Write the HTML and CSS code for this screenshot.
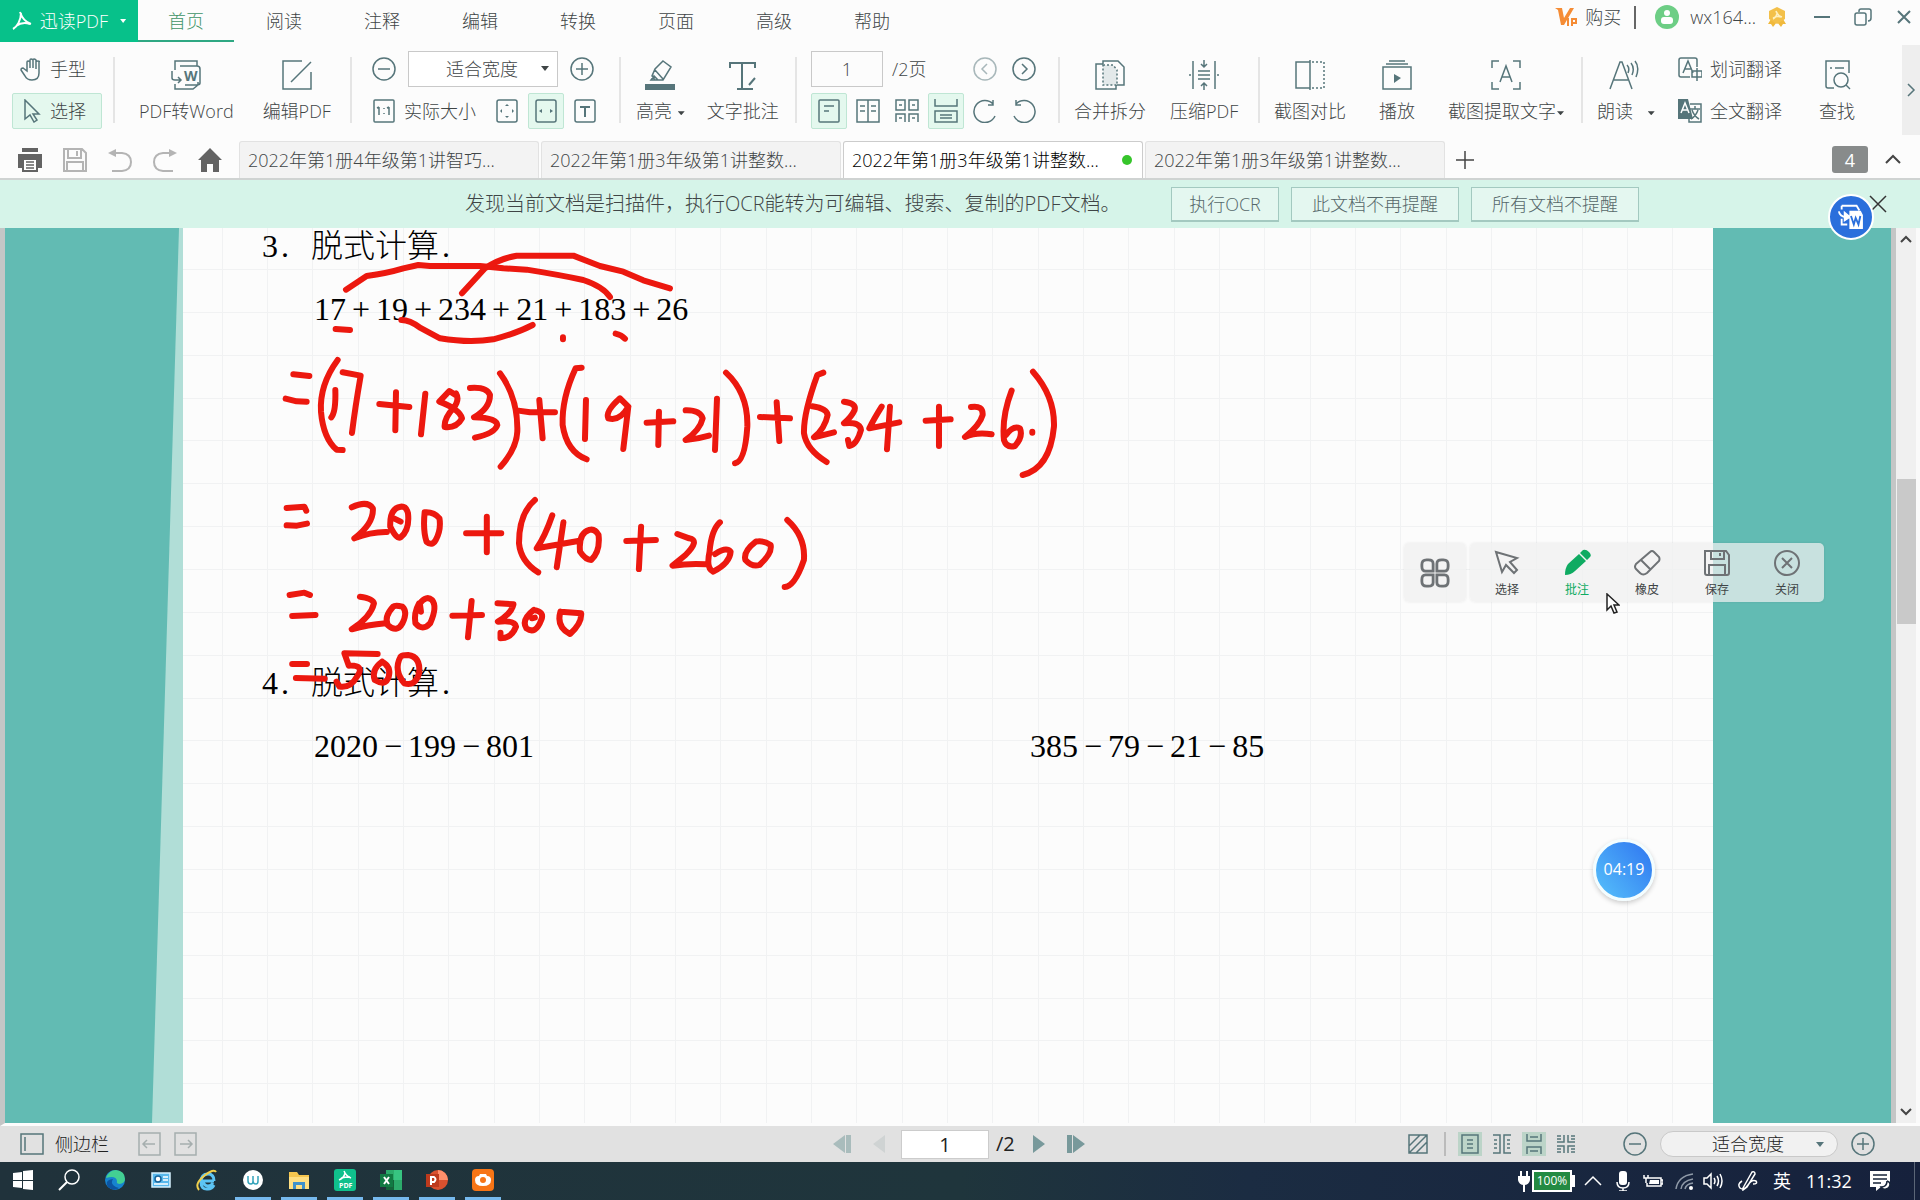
FILE: index.html
```html
<!DOCTYPE html>
<html lang="zh-CN">
<head>
<meta charset="utf-8">
<title>迅读PDF</title>
<link rel="stylesheet" href="styles.css">
</head>
<body>
<header class="titlebar">
  <button class="brand"><svg class="i20" viewBox="0 0 20 20"><path d="M8 1c2 6 5 10 11 12M9 2C9 9 5 16 1 18M4 15c4-3 9-4 14-2" stroke-width="2"/></svg><span>迅读PDF</span><span class="caret"></span></button>
  <nav class="menu">
    <a href="#home" class="on">首页</a><a href="#read">阅读</a><a href="#annotate">注释</a><a href="#edit">编辑</a><a href="#convert">转换</a><a href="#page">页面</a><a href="#advanced">高级</a><a href="#help">帮助</a>
  </nav>
  <div class="account">
    <a class="vip" href="#vip"><svg class="i22" viewBox="0 0 22 22"><path d="M0 2h7l2 10 6-10h4L9 19H6L3 4Z" fill="#f58c35" stroke="none"/><path d="M13 12v8M17 20v-7h4v4h-4" stroke="#f58c35" stroke-width="2"/></svg><span>购买</span></a>
    <span class="bar"></span>
    <a class="user" href="#user"><svg class="i24" viewBox="0 0 24 24"><circle cx="12" cy="12" r="12" fill="#6dce85" stroke="none"/><circle cx="12" cy="8" r="3" fill="#fff" stroke="none"/><rect x="6" y="12" width="12" height="7" rx="3" fill="#fff" stroke="none"/></svg><span>wx164...</span><svg class="i20" viewBox="0 0 20 20"><path d="M4 12l-3 5h3l2 3 4-5 4 5 2-3h3l-3-5Z" fill="#f0b93c" stroke="none"/><path d="M10 0l8 4v8l-8 5-8-5V4Z" fill="#f3c04a" stroke="none"/><path d="M9 4c1 4 3 5 6 6M10 5c0 3-2 6-4 7M6 11c3-2 5-2 8-1" stroke="#fff0c0"/></svg></a>
    <div class="win">
      <button aria-label="最小化"><svg class="i20" viewBox="0 0 20 20"><path d="M2 10h16" stroke-width="2"/></svg></button>
      <button aria-label="还原"><svg class="i20" viewBox="0 0 20 20"><rect x="2" y="6" width="11" height="12" rx="2"/><path d="M6 5V4q0-2 2-2h8q2 0 2 2v7q0 3-3 3"/></svg></button>
      <button aria-label="关闭"><svg class="i20" viewBox="0 0 20 20"><path d="M4 4l12 12M16 4L4 16" stroke-width="2"/></svg></button>
    </div>
  </div>
</header>

<section class="ribbon">
  <div class="group g-tools rows">
    <button class="row-btn"><svg class="i24" viewBox="0 0 24 24"><path d="M7 14V5q0-1 1-1t2 1v6V3q0-1 1-1t2 1v8V3q0-1 1-1t2 1v9V5q0-1 2-1t1 1v11q0 7-7 7-5 0-7-4l-4-6q0-2 2-2Z"/></svg><span>手型</span></button>
    <button class="row-btn active"><svg class="i24" viewBox="0 0 24 24"><path d="M5 1l14 14h-6l4 6-3 2-4-7-5 4Z"/></svg><span>选择</span></button>
  </div>
  <span class="sep"></span>
  <div class="group g-convert">
    <button class="big"><svg viewBox="0 0 30 30"><path d="M4 10V1h22v5M4 24v5h18l5-4v-3M1 11v7q0 2 3 2h6M7 17l3 3-3 3M9 6h17q3 0 3 3v14q0 2-3 2H14"/><text x="13" y="21" class="w">W</text></svg><span>PDF转Word</span></button>
    <button class="big"><svg viewBox="0 0 30 30"><path d="M20 1H1v28h28V12M9 22L29 2"/></svg><span>编辑PDF</span></button>
  </div>
  <span class="sep"></span>
  <div class="group g-zoom rows">
    <div class="line gap12">
      <button aria-label="缩小"><svg class="i24" viewBox="0 0 24 24"><circle cx="12" cy="12" r="11"/><path d="M6 12h12"/></svg></button>
      <label class="fit"><select aria-label="缩放"><option>适合宽度</option></select><span class="caret"></span></label>
      <button aria-label="放大"><svg class="i24" viewBox="0 0 24 24"><circle cx="12" cy="12" r="11"/><path d="M6 12h12M12 6v12"/></svg></button>
    </div>
    <div class="line gap3">
      <button class="actual"><svg class="i24" viewBox="0 0 24 24"><rect x="2" y="1" width="20" height="22" rx="1"/><path d="M7 8v8M17 8v8M5 9l2-1M15 9l2-1M12 9v1M12 14v1"/></svg><span>实际大小</span></button>
      <button class="sq" aria-label="适合页面"><svg class="i24" viewBox="0 0 24 24"><rect x="2" y="1" width="20" height="22" rx="2"/><path d="M10 7l2-2 2 2zM10 17l2 2 2-2zM7 10l-2 2 2 2zM17 10l2 2-2 2z" fill="#56757a" stroke="none"/></svg></button>
      <button class="sq active" aria-label="适合宽度"><svg class="i24" viewBox="0 0 24 24"><rect x="2" y="1" width="20" height="22" rx="2"/><path d="M8 10l-3 2 3 2zM16 10l3 2-3 2z" fill="#56757a" stroke="none"/></svg></button>
      <button class="sq" aria-label="适合文字"><svg class="i24" viewBox="0 0 24 24"><rect x="2" y="1" width="20" height="22" rx="2"/><path d="M7 8h10M12 8v10" stroke-width="2"/></svg></button>
    </div>
  </div>
  <span class="sep"></span>
  <div class="group g-mark">
    <button class="big"><svg viewBox="0 0 30 30"><path d="M18 1l8 6-8 13H10l-3-4 3-7ZM10 10l8 9M6 20l3-4 4 4Z"/><path d="M0 24h30v6H0z" fill="#56757a" stroke="none"/></svg><span>高亮 <i class="caret"></i></span></button>
    <button class="big"><svg viewBox="0 0 30 30"><path d="M2 8V3h25v5M14 3v26M9 29h16M21 25l6-7" stroke-width="2"/></svg><span>文字批注</span></button>
  </div>
  <span class="sep"></span>
  <div class="group g-page rows">
    <div class="line gap3">
      <input class="pageno" aria-label="页码" value="1"><span class="total">/2页</span>
      <button class="sq dim" aria-label="上一页"><svg class="i24" viewBox="0 0 24 24"><circle cx="12" cy="12" r="11"/><path d="M14 7l-5 5 5 5"/></svg></button>
      <button class="sq" aria-label="下一页"><svg class="i24" viewBox="0 0 24 24"><circle cx="12" cy="12" r="11"/><path d="M10 7l5 5-5 5"/></svg></button>
    </div>
    <div class="line gap3">
      <button class="sq active" aria-label="单页"><svg class="i24" viewBox="0 0 24 24"><rect x="2" y="1" width="20" height="22" rx="1"/><path d="M7 7h10M7 12h5"/></svg></button>
      <button class="sq" aria-label="双页"><svg class="i24" viewBox="0 0 24 24"><path d="M1 1h22v22H1zM12 1v22M4 7h5M4 12h5M15 7h5M15 12h5"/></svg></button>
      <button class="sq" aria-label="双页连续"><svg class="i24" viewBox="0 0 24 24"><path d="M1 1h9v10H1zM14 1h9v10h-9zM1 23v-8h9v8M14 23v-8h9v8M4 6h3M17 6h3M4 19h3M17 19h3"/></svg></button>
      <button class="sq active" aria-label="连续"><svg class="i24" viewBox="0 0 24 24"><path d="M1 0v7h22V0M1 12h22v11H1zM6 16h12M6 19h12"/></svg></button>
      <button class="sq" aria-label="顺时针旋转"><svg class="i24" viewBox="0 0 24 24"><path d="M22 17A11 11 0 1 1 20 5M20 1v5h-5"/></svg></button>
      <button class="sq" aria-label="逆时针旋转"><svg class="i24" viewBox="0 0 24 24"><path d="M2 17A11 11 0 1 0 4 5M4 1v5h5"/></svg></button>
    </div>
  </div>
  <span class="sep"></span>
  <div class="group g-merge">
    <button class="big"><svg viewBox="0 0 30 30"><path d="M8 4H1v25h20v-4M8 4V1h15l6 6v18h-8"/><path d="M8 5h10l4 5v15H8z" fill="#e3e9ea" stroke-dasharray="2 2"/></svg><span>合并拆分</span></button>
    <button class="big"><svg viewBox="0 0 30 30"><path d="M4 1v28M26 1v28M9 11h12M9 15h12M9 19h12M15 0v7M12 4l3 3 3-3M15 30v-7M12 26l3-3 3 3M1 14v2M29 14v2"/></svg><span>压缩PDF</span></button>
  </div>
  <span class="sep"></span>
  <div class="group g-capture">
    <button class="big"><svg viewBox="0 0 30 30"><path d="M15 2H1v26h14M15 0v30"/><path d="M17 2h12v26H17" stroke-dasharray="2 2"/></svg><span>截图对比</span></button>
    <button class="big"><svg viewBox="0 0 30 30"><path d="M1 7h28v22H1zM4 4h22M7 1h16"/><path d="M12 14v9l7-5z" fill="#56757a" stroke="none"/></svg><span>播放</span></button>
    <button class="big"><svg viewBox="0 0 30 30"><path d="M8 1H1v7M22 1h7v7M1 22v7h7M29 22v7h-7M9 22l6-16 6 16M11 17h8"/></svg><span>截图提取文字<i class="caret"></i></span></button>
  </div>
  <span class="sep"></span>
  <div class="group g-lang">
    <button class="big wide"><svg viewBox="0 0 30 30"><path d="M1 29L11 2h2l10 27M5 20h14"/><path d="M18 5q3 3 1 8M22 3q4 5 1 12M26 1q5 6 1 16"/></svg><span>朗读 <i class="caret"></i></span></button>
    <div class="rows tr">
      <button class="row-btn"><svg class="i24" viewBox="0 0 24 24"><path d="M12 20H3q-2 0-2-2V3q0-2 2-2h14q2 0 2 2v7M5 16L10 4l5 12M7 12h6M14 14h10v6H14zM19 11v13"/></svg><span>划词翻译</span></button>
      <button class="row-btn"><svg class="i24" viewBox="0 0 24 24"><path d="M0 0h10l5 20H0z" fill="#56757a" stroke="none"/><path d="M12 5h11v18H11v-4M12 10h10M17 7v3M20 11q-2 6-7 9M14 11q2 6 7 9"/><path d="M3 14L7 4l4 10M4 11h6" stroke="#fff"/></svg><span>全文翻译</span></button>
    </div>
    <button class="big find"><svg viewBox="0 0 30 30"><path d="M12 28H6q-2 0-2-2V1h23v12M8 8h2M13 8h9"/><circle cx="19" cy="20" r="7"/><path d="M24 25l4 4"/></svg><span>查找</span></button>
  </div>
  <button class="more" aria-label="更多工具"><svg class="i14" viewBox="0 0 14 14"><path d="M4 1l6 6-6 6"/></svg></button>
</section>

<section class="docbar">
  <div class="quick">
    <button aria-label="打印"><svg class="i24" viewBox="0 0 24 24"><path d="M4 0h16v4H4zM0 6h24v14h-4v4H4v-4H0z" fill="#636363" stroke="none"/><path d="M6 12h12v10H6z" fill="#fff" stroke="none"/><path d="M8 14h8M8 17h8M8 20h8" stroke="#636363"/></svg></button>
    <button aria-label="保存"><svg class="i24" viewBox="0 0 24 24"><path d="M1 1h18l4 4v18H1zM5 1v9h13V1M14 3v5M4 23v-9h16v9" stroke="#b4b4b4" stroke-width="2"/></svg></button>
    <button aria-label="撤销"><svg class="i24" viewBox="0 0 24 24"><path d="M2 5h12q9 1 9 9t-9 9H4" stroke="#b4b4b4" stroke-width="2"/><path d="M0 5l8-4v8z" fill="#b4b4b4" stroke="none"/></svg></button>
    <button aria-label="重做"><svg class="i24" viewBox="0 0 24 24"><path d="M22 5H10q-9 1-9 9t9 9h10" stroke="#b4b4b4" stroke-width="2"/><path d="M24 5l-8-4v8z" fill="#b4b4b4" stroke="none"/></svg></button>
    <button aria-label="主页"><svg class="i24" viewBox="0 0 24 24"><path d="M12 0l12 12h-3v12h-6v-8H9v8H3V12H0z" fill="#636363" stroke="none"/></svg></button>
  </div>
  <nav class="tabs">
    <a href="#d1">2022年第1册4年级第1讲智巧...</a>
    <a href="#d2">2022年第1册3年级第1讲整数...</a>
    <a href="#d3" class="on">2022年第1册3年级第1讲整数...<span class="dot"></span></a>
    <a href="#d4">2022年第1册3年级第1讲整数...</a>
  </nav>
  <button class="newtab" aria-label="新建标签"><svg class="i20" viewBox="0 0 20 20"><path d="M1 10h18M10 1v18"/></svg></button>
  <button class="count">4</button>
  <button class="fold" aria-label="收起"><svg class="i20" viewBox="0 0 20 20"><path d="M3 13l7-7 7 7" stroke-width="2"/></svg></button>
</section>

<section class="notice">
  <p>发现当前文档是扫描件，执行OCR能转为可编辑、搜索、复制的PDF文档。</p>
  <button class="nb">执行OCR</button>
  <button class="nb">此文档不再提醒</button>
  <button class="nb">所有文档不提醒</button>
  <button class="close" aria-label="关闭提示"><svg class="i20" viewBox="0 0 20 20"><path d="M2 2l16 16M18 2L2 18" stroke="#333"/></svg></button>
</section>

<main class="view">
  <svg class="desk" aria-hidden="true"><path d="M0 0H174L147 895H0z" fill="#62bbb3" stroke="none"/></svg>
  <article class="sheet">
    <svg class="grid" aria-hidden="true"><defs><pattern id="cells" x="84" y="41" width="136" height="300" patternUnits="userSpaceOnUse"><path d="M0 0h136v1H0zM0 43h136v1H0zM0 86h136v1H0zM0 129h136v1H0zM0 171h136v1H0zM0 214h136v1H0zM0 257h136v1H0zM0 0h1v300H0zM45 0h1v300h-1zM91 0h1v300h-1z" fill="#f1f2f3" stroke="none"/></pattern></defs><rect width="100%" height="100%" fill="url(#cells)" stroke="none"/></svg>
    <section class="q q3">
      <h2><span class="no">3<i>.</i></span>脱式计算<span class="stop">.</span></h2>
      <div class="exprs"><p>17<b>+</b>19<b>+</b>234<b>+</b>21<b>+</b>183<b>+</b>26</p></div>
    </section>
    <section class="q q4">
      <h2><span class="no">4<i>.</i></span>脱式计算<span class="stop">.</span></h2>
      <div class="exprs"><p>2020<b>−</b>199<b>−</b>801</p><p>385<b>−</b>79<b>−</b>21<b>−</b>85</p></div>
    </section>
  </article>
  <div class="scroll"><svg class="i14" viewBox="0 0 14 14"><path d="M2 10l5-5 5 5" stroke="#444" stroke-width="2"/></svg><span class="thumb"></span><svg class="i14" viewBox="0 0 14 14"><path d="M2 4l5 5 5-5" stroke="#444" stroke-width="2"/></svg></div>

  <svg class="ink" aria-hidden="true">
    <g transform="translate(240 -3) scale(.3333)">
      <path d="M318 194L380 153Q440 145 490 130L535 120 570 123H720L790 130 860 134Q960 150 1030 165 1090 185 1110 216"/>
      <path d="M666 205L735 130Q780 100 830 92H1000L1080 123 1150 140 1210 166 1290 190M484 285Q510 285 540 308L600 340Q690 355 760 343 830 325 878 300M287 312L330 315M969 337V343M1127 326Q1145 330 1155 341"/>
      <path d="M160 448L208 453M137 521L170 529 200 530M293 405Q238 480 243 560 250 640 290 674L308 675M286 495Q288 560 274 577M308 442L362 452Q345 550 336 624M418 537L508 546M468 502L466 616M556 506L543 628"/>
      <path d="M650 512L628 498 598 530Q658 552 666 580 650 610 614 606 612 580 640 550 660 525 648 505M690 489Q740 485 750 510 750 550 702 577 770 578 772 600 765 625 705 638M780 445Q835 520 832 620 830 670 782 725"/>
      <path d="M835 557L870 562 945 562M898 525L908 640M1025 428L1007 430Q965 520 968 600 980 680 1040 703M1038 525L1035 642M1165 545L1140 520Q1095 560 1105 580 1140 590 1165 545L1150 672M1220 593L1300 589M1257 560L1255 660"/>
    </g>
    <g transform="translate(640 112) scale(.3333)">
      <path d="M137 211Q180 210 188 235 180 270 137 300 170 298 207 287M231 176L225 330M258 98Q325 160 322 260 315 365 285 370M360 231L450 235M410 187L418 303M550 98L532 105Q490 220 492 280 500 330 560 366"/>
      <path d="M517 199Q560 205 563 225 555 265 522 292L582 277M612 185Q650 190 644 210 635 230 612 250 660 245 663 270 650 315 628 318L624 300M725 200Q700 240 688 265L778 247M750 200L741 328M857 242L932 238M897 200V318"/>
      <path d="M993 201Q1030 195 1028 225 1020 255 975 291 1010 275 1055 283M1115 152Q1085 230 1092 300 1100 325 1125 318 1150 290 1140 265 1120 255 1098 285M1177 275V278M1179 95Q1245 170 1242 260 1230 385 1148 405"/>
    </g>
    <g transform="translate(260 252) scale(.37 .3333)">
      <path d="M72 84L120 80 125 92M72 136L100 137 127 131M248 82Q290 60 305 85 308 130 255 175 300 155 343 156M380 80Q350 85 352 140 370 180 380 172 405 150 400 100 395 78 380 80M362 115L380 125M445 97Q440 150 450 185 465 200 475 180 490 150 485 115 470 95 445 97"/>
      <path d="M557 160H652M613 110V217M743 60Q700 100 700 190 705 245 752 277M790 106Q770 170 748 205L860 183M820 127L802 262M890 150Q860 160 865 215 880 240 895 240 920 215 915 165 905 145 890 150M990 183L1070 180M1030 140L1024 267"/>
      <path d="M1128 162L1160 175Q1190 180 1150 225L1115 257Q1160 250 1205 253M1243 127Q1220 150 1215 215 1205 265 1225 275 1270 250 1272 215 1260 200 1230 222M1340 185Q1305 215 1312 240 1330 262 1350 255 1385 220 1380 195 1360 180 1340 185M1425 120Q1475 170 1470 240 1445 320 1418 321"/>
      <path d="M80 345L120 338 135 345M87 408L150 405M270 350Q305 355 308 370 300 410 248 448 290 435 340 430M360 380Q335 410 345 435 370 460 385 430 400 395 385 380 365 375 360 380M430 370Q415 400 420 430 440 455 460 430 480 380 465 360 450 345 432 370L435 395"/>
      <path d="M520 407L600 405M572 363L562 472M642 370L685 373Q680 400 643 425 690 420 692 440 680 475 650 475L650 458M740 390Q705 420 720 445 745 465 760 420 770 395 740 390M735 415L743 413M812 395L868 400Q870 430 838 462 800 440 812 395"/>
      <path d="M87 552H127M97 594L175 596M318 522L228 520 240 557Q285 555 262 590 245 625 215 620L207 605M330 545Q300 570 310 600 340 620 348 590 355 560 330 545M380 530Q360 570 390 610 420 620 430 580 435 530 400 525 385 525 380 530"/>
    </g>
  </svg>

  <div class="palette">
    <button class="apps" aria-label="工具"><svg viewBox="0 0 32 32"><path d="M14 14H6q-4 0-4-5V7q0-5 5-5h2q5 0 5 4zM18 14h8q4 0 4-5V7q0-5-5-5h-2q-5 0-5 4zM14 18H6q-4 0-4 5v2q0 5 5 5h2q5 0 5-4zM18 18h8q4 0 4 5v2q0 5-5 5h-2q-5 0-5-4z" stroke-width="3"/></svg></button>
    <div class="pens">
      <button><svg viewBox="0 0 28 28"><path d="M3 3l21 6-7 4 7 8-3 3-8-8-4 7Z" stroke-width="2"/></svg><span>选择</span></button>
      <button class="on"><svg viewBox="0 0 28 28"><path d="M2 26q0-7 3-11L16 5l7 7-11 10q-4 4-10 4ZM17 4l3-3q3-1 6 2t1 5l-3 3z" fill="#0fab62" stroke="none"/></svg><span>批注</span></button>
      <button><svg viewBox="0 0 28 28"><path d="M3 15L17 3q2-2 4 0l5 5q1 2 0 4L14 24q-4 3-7 0l-4-4q-2-2 0-5ZM8 11l10 10" stroke-width="2"/></svg><span>橡皮</span></button>
      <button><svg viewBox="0 0 28 28"><path d="M2 2h21l3 4v18q0 2-2 2H4q-2 0-2-2ZM8 2v8h13V2M17 4v3M6 26V16h16v10" stroke-width="2"/></svg><span>保存</span></button>
      <button><svg viewBox="0 0 28 28"><circle cx="14" cy="14" r="12" stroke-width="2"/><path d="M9 9l10 10M19 9L9 19" stroke-width="2"/></svg><span>关闭</span></button>
    </div>
  </div>
  <svg class="cursor" viewBox="0 0 14 22" aria-hidden="true"><path d="M1 1v16l4-4 3 7 3-1-3-7h5z" fill="#fff" stroke="#222"/></svg>
  <div class="timer">04:19</div>
</main>
<button class="toword" aria-label="转为Word"><svg viewBox="0 0 30 30"><path d="M5 3h16l3 5M5 3v4M5 17v6h6M2 9q1 6 8 6" stroke="#fff" stroke-width="2"/><path d="M8 10l6 5-6 4zM14 9h11l2 4v14H14z" fill="#fff" stroke="#fff"/><path d="M15 14l3 9 2-7 3 7 2-9" stroke="#2a6fdc" stroke-width="2"/></svg></button>

<footer class="status">
  <button class="side"><svg class="i24" viewBox="0 0 24 24"><path d="M1 2h22v20H1zM5 5v14"/></svg><span>侧边栏</span></button>
  <button class="mut a1" aria-label="后退"><svg class="i24" viewBox="0 0 24 24"><path d="M1 1h21v22H1zM5 12h12M9 8l-4 4 4 4"/></svg></button>
  <button class="mut a2" aria-label="前进"><svg class="i24" viewBox="0 0 24 24"><path d="M1 1h21v22H1zM6 12h12M14 8l4 4-4 4"/></svg></button>
  <div class="pager">
    <button aria-label="首页"><svg class="i20" viewBox="0 0 20 20"><path d="M13 1v18L1 10zM14 1h5v18h-5z" fill="#a9bcbc" stroke="none"/></svg></button>
    <button aria-label="上一页"><svg class="i20" viewBox="0 0 20 20"><path d="M16 1v18L4 10z" fill="#cfd3d3" stroke="none"/></svg></button>
    <input aria-label="当前页" value="1"><span>/2</span>
    <button aria-label="下一页"><svg class="i20" viewBox="0 0 20 20"><path d="M4 1v18l12-9z" fill="#78999b" stroke="none"/></svg></button>
    <button aria-label="末页"><svg class="i20" viewBox="0 0 20 20"><path d="M7 1v18l12-9zM1 1h5v18H1z" fill="#78999b" stroke="none"/></svg></button>
  </div>
  <div class="modes">
    <button aria-label="背景"><svg class="i20" viewBox="0 0 20 20"><path d="M1 1h18v18H1zM1 12L12 1M1 19L19 1M8 19L19 8"/></svg></button>
    <span class="vr"></span>
    <button class="m on" aria-label="单页"><svg class="i20" viewBox="0 0 20 20"><path d="M2 1h16v18H2zM7 6h6M7 10h6M7 14h6"/></svg></button>
    <button class="m" aria-label="双页"><svg class="i20" viewBox="0 0 20 20"><path d="M1 1h7v18H1M19 1h-7v18h7M2 6h3M2 10h3M2 14h3M15 6h3M15 10h3M15 14h3"/></svg></button>
    <button class="m on" aria-label="连续"><svg class="i20" viewBox="0 0 20 20"><path d="M3 0v7h14V0M3 20v-7h14v7M6 3h8M6 17h8"/></svg></button>
    <button class="m" aria-label="双页连续"><svg class="i20" viewBox="0 0 20 20"><path d="M1 8h7V1M19 8h-7V1M1 12h7v7M19 12h-7v7M1 2h4M1 5h4M15 2h4M15 5h4M1 15h4M1 18h4M15 15h4M15 18h4"/></svg></button>
    <button class="zo" aria-label="缩小"><svg class="i24" viewBox="0 0 24 24"><circle cx="12" cy="12" r="11"/><path d="M6 12h12"/></svg></button>
    <label class="fit pill"><select aria-label="页面缩放"><option>适合宽度</option></select><span class="caret"></span></label>
    <button aria-label="放大"><svg class="i24" viewBox="0 0 24 24"><circle cx="12" cy="12" r="11"/><path d="M6 12h12M12 6v12"/></svg></button>
  </div>
</footer>

<footer class="taskbar">
  <div class="apps-row">
    <button aria-label="开始"><svg viewBox="0 0 22 22"><path d="M1 4l9-1v8H1zM11 2l10-1v10H11zM1 12h9v7l-9-1zM11 12h10v9l-10-1z" fill="#fff" stroke="none"/></svg></button>
    <button aria-label="搜索"><svg viewBox="0 0 22 22"><circle cx="14" cy="8" r="7" stroke="#fff"/><path d="M9 13l-8 8" stroke="#fff" stroke-width="2"/></svg></button>
    <button aria-label="Edge"><svg viewBox="0 0 22 22"><circle cx="11" cy="11" r="10" fill="#1683cf" stroke="none"/><path d="M2 9Q5 1 12 1q9 1 9 9 0 4-5 5-4 0-3-3Q12 6 2 9" fill="#43cf93" stroke="none"/><path d="M9 10q-4 6 6 9-5 4-11-1-4-7 5-8" fill="#0c54a0" stroke="none"/></svg></button>
    <button aria-label="控制面板"><svg viewBox="0 0 22 22"><rect x="2" y="4" width="18" height="14" fill="#58b8ec" stroke="#d6f2ff"/><circle cx="8" cy="10" r="3" fill="#fff" stroke="#16639a"/><path d="M13 8h5M13 11h5M4 15h14" stroke="#fff"/></svg></button>
    <button aria-label="IE"><svg viewBox="0 0 22 22"><path d="M18 12H7q1 5 5 5 3 0 5-3M18 12q0-7-6-7-7 0-7 8t7 7q4 0 6-4" stroke="#5cc4f4" stroke-width="3"/><path d="M3 21Q-2 15 8 7 18-1 20 3" stroke="#f0cf4c" stroke-width="2"/></svg></button>
    <button class="run" aria-label="白板"><svg viewBox="0 0 22 22"><circle cx="11" cy="11" r="10" fill="#fff" stroke="none"/><path d="M6 7v5q0 3 3 3 2 0 2-3V7v5q0 3 3 3 2 0 2-3V7" stroke="#34a3ba"/></svg></button>
    <button class="run" aria-label="文件"><svg viewBox="0 0 22 22"><path d="M1 3h8l2 3h10v14H1z" fill="#f5c64f" stroke="none"/><path d="M1 8h20v12H1z" fill="#ffdf82" stroke="none"/><path d="M5 20v-7h12v7h-3v-4H8v4z" fill="#3f91cb" stroke="none"/></svg></button>
    <button class="run" aria-label="迅读PDF"><svg viewBox="0 0 22 22"><rect width="22" height="22" rx="3" fill="#10c08c" stroke="none"/><path d="M10 2q2 5 7 7M11 4Q10 9 5 11M7 9q4-1 9-1" stroke="#fff"/><text x="5" y="19" class="tp">PDF</text></svg></button>
    <button class="run" aria-label="Excel"><svg viewBox="0 0 22 22"><rect x="6" y="1" width="16" height="20" fill="#2cab6b" stroke="none"/><path d="M14 1h8v10h-8z" fill="#37c481" stroke="none"/><path d="M6 11h8v10H6z" fill="#14653a" stroke="none"/><rect x="0" y="5" width="13" height="13" fill="#117a43" stroke="none"/><path d="M4 8l5 7M9 8l-5 7" stroke="#fff" stroke-width="2"/></svg></button>
    <button class="run" aria-label="PowerPoint"><svg viewBox="0 0 22 22"><circle cx="12" cy="11" r="10" fill="#d9512f" stroke="none"/><path d="M12 1a10 10 0 0 1 10 10H12z" fill="#ff8f6b" stroke="none"/><rect y="5" width="13" height="13" fill="#bd3a1d" stroke="none"/><path d="M5 16V8h3q3 2 0 5H5" stroke="#fff" stroke-width="2"/></svg></button>
    <button class="run" aria-label="录屏"><svg viewBox="0 0 22 22"><rect width="22" height="22" rx="4" fill="#f77516" stroke="none"/><path d="M8 5h6l1 2q4 0 4 4 0 6-8 6T3 11q0-4 4-4Z" fill="#fff" stroke="none"/><circle cx="11" cy="11" r="3" fill="#f77516" stroke="none"/></svg></button>
  </div>
  <div class="tray">
    <svg class="plug" viewBox="0 0 14 24"><path d="M4 2v6M10 2v6M7 14v9" stroke="#fff" stroke-width="2"/><path d="M1 7h12v4q-1 5-6 5t-6-5z" fill="#fff" stroke="none"/></svg>
    <span class="batt">100%</span><span class="nub"></span>
    <svg class="i20 t-up" viewBox="0 0 20 20"><path d="M2 14l8-8 8 8" stroke="#fff"/></svg>
    <svg class="i20 t-mic" viewBox="0 0 20 20"><rect x="6" y="0" width="8" height="14" rx="3" fill="#fff" stroke="none"/><path d="M4 11q0 6 6 6t6-6M10 17v3M6 20h8" stroke="#fff"/></svg>
    <svg class="i20 t-bat" viewBox="0 0 20 20"><path d="M5 7h13v8H4v-3M18 9h2v4h-2M1 4v3h4V4M3 7v5" stroke="#fff"/><path d="M7 9h9v4H6z" fill="#fff" stroke="none"/></svg>
    <svg class="i20 t-wifi" viewBox="0 0 20 20"><path d="M1 18Q3 5 18 3M6 18q1-8 12-10M10 18q1-5 8-6" stroke="#8f9aa8"/><circle cx="16" cy="17" r="2" fill="#fff" stroke="none"/></svg>
    <svg class="i20 t-vol" viewBox="0 0 20 20"><path d="M1 7h3l4-4v14l-4-4H1zM11 7q2 3 0 6M14 5q3 5 0 10M17 3q4 7 0 14" stroke="#fff"/></svg>
    <svg class="i20 t-pen" viewBox="0 0 20 20"><path d="M5 17L14 1q3-1 3 2L9 16l-4 3zM4 10q-5 3-2 7 4 3 8-3 4-6 8-4 2 3-3 3" stroke="#fff"/></svg>
    <span class="ime">英</span><time>11:32</time>
    <svg class="t-msg" viewBox="0 0 22 22"><path d="M1 1h20v16h-9l-5 4v-4H1z" fill="#fff" stroke="none"/><path d="M4 5h14M4 9h14M4 13h8" stroke="#17253a"/><path d="M18 11q0 6-6 6 2 3 5 2 4-1 4-5 0-2-3-3" fill="#fff" stroke="#17253a"/></svg>
    <span class="peek"></span>
  </div>
</footer>
</body>
</html>
```
FILE: styles.css
```css
* { box-sizing: border-box; }
html, body { height: 100%; margin: 0; }
body {
  display: flex;
  flex-direction: column;
  overflow: hidden;
  background: #fcfcfc;
  color: #3f4546;
  font: 300 18px/24px "Open Sans", "Noto Sans CJK SC", sans-serif;
}
button, input, select {
  font: inherit;
  color: inherit;
  border: 0;
  padding: 0;
  margin: 0;
  background: none;
  border-radius: 0;
}
button { display: flex; align-items: center; justify-content: center; white-space: nowrap; flex: none; }
a { color: inherit; text-decoration: none; }
p, h2 { margin: 0; font-weight: inherit; }
svg { fill: none; stroke: #56757a; stroke-width: 1.5; flex: none; display: block; }
svg text { stroke: none; }
.i14 { width: 14px; height: 14px; }
.i20 { width: 20px; height: 20px; }
.i22 { width: 22px; height: 22px; }
.i24 { width: 24px; height: 24px; }
.caret {
  display: inline-block;
  width: 8px;
  height: 5px;
  background: currentColor;
  clip-path: polygon(0 0, 100% 0, 50% 100%);
}

/* Title bar */
.titlebar { display: flex; height: 42px; flex: none; }
.brand { width: 138px; background: #07c18a; color: #fff; gap: 8px; }
.brand svg { stroke: #fff; }
.brand .caret { margin-left: 4px; width: 6px; height: 4px; }
.menu { display: flex; gap: 2px; }
.menu a { width: 96px; line-height: 42px; text-align: center; }
.menu .on { color: #3f9468; box-shadow: inset 0 -2px #2fa883; }
.account { display: flex; margin-left: auto; height: 34px; align-items: center; padding-right: 6px; }
.vip, .user { display: flex; align-items: center; gap: 8px; }
.bar { width: 2px; height: 23px; background: #666; margin: 0 19px 0 13px; }
.user { gap: 11px; }
.win { display: flex; gap: 21px; margin-left: 25px; }

/* Ribbon */
.ribbon { display: flex; height: 93px; flex: none; }
.sep { width: 2px; height: 66px; margin-top: 15px; background: #e5e5e5; flex: none; }
.group { display: flex; flex: none; }
.rows { flex-direction: column; padding-top: 9px; gap: 6px; }
.line { display: flex; align-items: center; height: 36px; }
.gap12 { gap: 12px; }
.gap3 { gap: 3px; }
.big { flex-direction: column; justify-content: flex-start; padding-top: 18px; gap: 9px; }
.big svg { width: 30px; height: 30px; }
.big span { height: 24px; }
.big .caret { margin-left: 1px; width: 7px; height: 4px; vertical-align: middle; }
.w { font: 700 14px "Open Sans", sans-serif; fill: #56757a; }
.row-btn { height: 36px; gap: 8px; }
.g-tools { width: 113px; padding-left: 12px; }
.g-tools .row-btn { width: 90px; border: 1px solid transparent; justify-content: flex-start; padding-left: 7px; gap: 6px; }
.g-tools .active, .sq.active { background: #e4f8ee; border: 1px solid #bfe6d4; border-radius: 2px; }
.g-convert { width: 235px; padding-left: 24px; gap: 29px; }
.g-zoom { width: 267px; padding-left: 20px; }
.fit { position: relative; display: block; }
.fit select { appearance: none; width: 150px; height: 36px; border: 1px solid #c9c9c9; padding-left: 37px; display: block; background: #fff; }
.fit .caret { position: absolute; right: 9px; top: 15px; pointer-events: none; }
.actual { gap: 8px; margin-right: 10px; }
.sq { width: 36px; height: 36px; }
.g-mark { width: 174px; padding-left: 15px; gap: 22px; }
.g-page { width: 261px; padding-left: 14px; }
.pageno { width: 72px; height: 36px; border: 1px solid #c9c9c9; text-align: center; }
.total { width: 78px; padding-left: 6px; }
.dim { opacity: .5; }
.g-merge { width: 198px; padding-left: 14px; gap: 24px; }
.g-capture { width: 321px; padding-left: 14px; gap: 33px; }
.g-lang { padding-left: 14px; }
.wide { align-items: flex-start; }
.wide svg { margin-left: 12px; }
.wide span { display: block; width: 60px; text-align: left; }
.wide .caret { margin-left: 10px; }
.g-lang .tr { display: flex; margin-left: 21px; }
.find { margin-left: 37px; }
.more { width: 18px; height: 90px; margin: 3px 0 0 auto; background: #eee; }

/* Document tabs */
.docbar { display: flex; height: 45px; flex: none; padding-top: 6px; border-bottom: 2px solid #cfd3d2; align-items: center; }
.quick { display: flex; gap: 21px; padding-left: 18px; width: 239px; flex: none; }
.tabs { display: flex; gap: 2px; align-self: stretch; }
.tabs a { width: 300px; background: #f3f3f3; border: 1px solid #e2e2e2; border-bottom: 0; border-radius: 3px 3px 0 0; padding: 0 10px 0 8px; line-height: 37px; display: flex; align-items: center; justify-content: space-between; white-space: nowrap; }
.tabs .on { background: #fff; color: #000; border-color: #ccc; }
.dot { width: 10px; height: 10px; border-radius: 50%; background: #36c52b; }
.newtab { margin-left: 10px; }
.newtab svg, .fold svg { stroke: #444; }
.count { margin-left: auto; width: 36px; height: 27px; border-radius: 3px; background: #888b8b; color: #fff; font-weight: 400; }
.fold { margin: 0 17px 0 15px; }

/* OCR notice */
.notice { display: flex; height: 48px; flex: none; align-items: center; background: #d6f4e9; padding: 0 32px 0 465px; }
.notice p { font-size: 20px; width: 706px; white-space: nowrap; }
.nb { width: 108px; height: 35px; margin-right: 12px; background: #e4f7f0; border: 1px solid #a3c9c0; border-bottom-width: 2px; color: #56686a; }
.nb + .nb { width: 168px; }
.close { margin-left: auto; }

/* Page view */
.view { position: relative; flex: 1; min-height: 0; display: flex; background: #b1ded7; border-left: 5px solid #c4c6c6; border-bottom: 3px solid #fcfcfc; overflow: hidden; }
.desk { width: 178px; height: 100%; }
.sheet { position: relative; flex: 1; background: #fcfcfc; color: #000; border-right: 178px solid #62bbb3; font: 300 32px/40px "Liberation Serif", "Noto Sans CJK SC", serif; overflow: hidden; }
.grid { position: absolute; left: 0; top: 0; width: 100%; height: 100%; }
.q { position: relative; padding-left: 79px; }
.q h2 { font-size: 32px; line-height: 36px; white-space: nowrap; }
.q .no { display: inline-block; width: 49px; font-weight: 400; }
.q i { font-style: normal; margin-left: 3px; }
.q .stop { margin-left: 3px; }
.exprs { display: flex; padding: 25px 0 0 52px; }
.exprs p { flex: none; white-space: nowrap; }
.exprs p:not(:last-child) { width: 716px; }
.exprs b { font-weight: 400; margin: 0 6px; }
.q4 { padding-top: 336px; }
.scroll { width: 29px; background: #f0f0f0; border-left: 5px solid #c4c6c6; border-right: 4px solid #fafafa; display: flex; flex-direction: column; align-items: center; padding: 4px 0; flex: none; }
.thumb { width: 19px; height: 145px; background: #c9c9c9; margin: 233px 0 auto; }
.ink { position: absolute; left: -5px; top: 0; width: 1200px; height: 560px; stroke: #ec180f; }
.ink path { vector-effect: non-scaling-stroke; stroke-width: 6px; stroke-linecap: round; stroke-linejoin: round; }

/* Floating tools */
.palette { position: absolute; right: 96px; top: 315px; display: flex; gap: 4px; }
.palette svg { stroke: #6e7275; }
.apps, .pens { background: rgba(240, 240, 240, .72); border-radius: 5px; height: 59px; box-shadow: 0 0 3px rgba(0, 0, 0, .08); }
.apps { width: 62px; }
.apps svg { width: 30px; height: 30px; }
.pens { display: flex; padding: 2px 2px 0; }
.pens button { width: 70px; flex-direction: column; gap: 4px; font-size: 12px; line-height: 18px; font-weight: 400; }
.pens svg { width: 28px; height: 28px; }
.pens .on { color: #0fab62; }
.cursor { position: absolute; left: 1601px; top: 365px; width: 14px; height: 22px; }
.timer { position: absolute; right: 265px; top: 611px; width: 62px; height: 62px; border: 3px solid #f3fdff; border-radius: 50%; background: linear-gradient(50deg, #56c1fb, #2f75f0); color: #fff; font-size: 16px; font-weight: 400; line-height: 54px; text-align: center; box-shadow: 0 2px 5px rgba(0, 0, 0, .2); }
.toword { position: fixed; right: 46px; top: 194px; width: 46px; height: 46px; border: 2px solid #fff; border-radius: 50%; background: #2a6fdc; }
.toword svg { width: 28px; height: 28px; }

/* Status bar */
.status { display: flex; height: 36px; flex: none; align-items: center; background: #e1e1e1; position: relative; color: #222; }
.side { gap: 11px; margin-left: 20px; }
.mut svg { stroke: #a5aeae; }
.a1 { margin-left: 29px; }
.a2 { margin-left: 12px; }
.pager { position: absolute; left: 832px; display: flex; align-items: center; font-size: 20px; font-weight: 400; }
.pager button:nth-of-type(2) { margin: 0 12px 0 17px; }
.pager button:nth-of-type(3) { margin: 0 17px 0 12px; }
.pager input { width: 88px; height: 29px; background: #fff; border: 1px solid #ccc; text-align: center; }
.pager span { width: 28px; padding-left: 7px; }
.modes { margin-left: auto; display: flex; align-items: center; padding-right: 45px; }
.vr { width: 2px; height: 24px; background: #bbb; margin: 0 12px 0 16px; }
.m { width: 24px; height: 24px; margin-right: 8px; }
.m.on { background: #bcd4c8; }
.zo { margin: 0 13px 0 37px; }
.pill { margin-right: 13px; }
.pill select { width: 178px; height: 26px; border-radius: 13px; background: #f1f1f1; padding-left: 51px; line-height: 24px; }
.pill .caret { right: 14px; top: 11px; color: #56757a; }

/* Taskbar */
.taskbar { display: flex; height: 38px; flex: none; background: linear-gradient(90deg, #20323b, #1f353c 50%, #1b2c42 65%, #16213c); color: #fff; }
.apps-row { display: flex; }
.apps-row button { width: 46px; border-bottom: 3px solid transparent; }
.apps-row .run { width: 36px; margin: 0 5px; border-bottom-color: #76b9ed; }
.apps-row svg { width: 22px; height: 22px; }
.tray { margin-left: auto; display: flex; align-items: center; padding-right: 5px; }
.plug { width: 14px; height: 24px; margin-right: 1px; }
.batt { width: 40px; height: 22px; border: 2px solid #fff; background: #238a43; font-size: 12px; line-height: 18px; font-weight: 400; text-align: center; }
.nub { width: 3px; height: 12px; background: #fff; margin-right: 8px; }
.t-up { margin-right: 10px; }
.t-mic { margin-right: 10px; }
.t-bat { margin-right: 12px; }
.t-wifi { margin-right: 8px; }
.t-vol { margin-right: 15px; }
.t-pen { margin-right: 15px; }
.ime { width: 33px; font-weight: 400; }
.tray time { width: 63px; font-weight: 400; }
.t-msg { width: 22px; height: 22px; margin-right: 23px; }
.peek { width: 1px; height: 38px; background: #5b6677; }
.tp { font: 700 7px "Open Sans", sans-serif; fill: #fff; }
```
